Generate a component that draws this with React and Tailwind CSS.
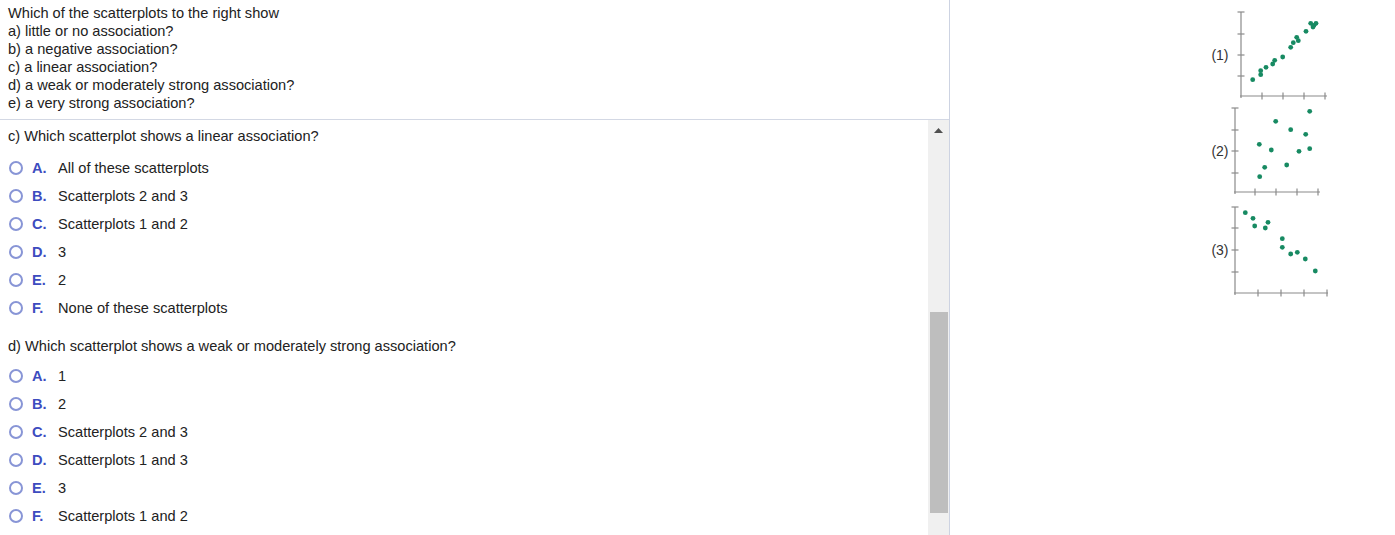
import React from "react";

const plots = [
  {
    label: "(1)",
    ax: 1241, top: 12, ay: 96, right: 1326,
    yt: [34, 55, 76], xt: [1262, 1283, 1304, 1325], ly: 55,
    pts: [[1252.7,79.7],[1260.7,74.7],[1260.7,70.7],[1266,67.3],[1272.7,64],[1274.7,60.3],[1282.7,57],[1290.7,47.3],[1293.3,42.7],[1296.7,37.3],[1298.3,40.7],[1306,31.3],[1310.7,23.3],[1314,25.3],[1316,23.3],[1313,27]],
  },
  {
    label: "(2)",
    ax: 1235, top: 108, ay: 192, right: 1319,
    yt: [130, 151, 173], xt: [1255, 1276, 1297, 1318], ly: 151,
    pts: [[1309.7,111.3],[1275.7,121.3],[1290.7,129.7],[1305.7,134.3],[1259.3,144.3],[1271.3,150],[1299,151.3],[1309.7,148.7],[1264.7,167.3],[1286.7,165],[1259.7,176.7]],
  },
  {
    label: "(3)",
    ax: 1235, top: 207, ay: 293, right: 1327,
    yt: [228, 250, 272], xt: [1258, 1281, 1304, 1327], ly: 250,
    pts: [[1245.3,212.7],[1253,218.3],[1254.7,226],[1268,222.3],[1265.3,228],[1282.3,238.7],[1282.3,247.3],[1290.7,254],[1297.3,252.3],[1305.3,259],[1315.3,271]],
  },
];

function Plots() {
  return (
    <svg width="140" height="305" viewBox="1200 0 140 305">
      {plots.map((p, i) => (
        <g key={i}>
          <line x1={p.ax} y1={p.top} x2={p.ax} y2={p.ay + 2} stroke="#8a8a8a" strokeWidth="1.2" />
          <line x1={p.ax - 1} y1={p.ay} x2={p.right + 1} y2={p.ay} stroke="#8a8a8a" strokeWidth="1.2" />
          {[p.top, ...p.yt].map((y, j) => (
            <line key={"y" + j} x1={p.ax - 3.5} y1={y} x2={p.ax + 3.5} y2={y} stroke="#8a8a8a" strokeWidth="1.2" />
          ))}
          {p.xt.map((x, j) => (
            <line key={"x" + j} x1={x} y1={p.ay - 3.5} x2={x} y2={p.ay + 3.5} stroke="#8a8a8a" strokeWidth="1.2" />
          ))}
          {p.pts.map(([x, y], j) => (
            <circle key={"p" + j} cx={x} cy={y} r="2.4" fill="#178a62" />
          ))}
          <text x="1228.5" y={p.ly + 5} textAnchor="end" fontSize="14" fill="#333" fontFamily="'Liberation Sans', Arial, sans-serif">
            {p.label}
          </text>
        </g>
      ))}
    </svg>
  );
}

function Option({ letter, text }) {
  return (
    <div className="flex items-center h-[28px]">
      <span className="ml-[1px] w-[14px] h-[14px] rounded-full border-2 border-[#8895d6] shrink-0" />
      <span className="ml-[9px] w-[26px] font-bold text-[#3d4cbf]">{letter}</span>
      <span>{text}</span>
    </div>
  );
}

export default function App() {
  const c = [
    ["A.", "All of these scatterplots"],
    ["B.", "Scatterplots 2 and 3"],
    ["C.", "Scatterplots 1 and 2"],
    ["D.", "3"],
    ["E.", "2"],
    ["F.", "None of these scatterplots"],
  ];
  const d = [
    ["A.", "1"],
    ["B.", "2"],
    ["C.", "Scatterplots 2 and 3"],
    ["D.", "Scatterplots 1 and 3"],
    ["E.", "3"],
    ["F.", "Scatterplots 1 and 2"],
  ];
  return (
    <div className="flex w-[1395px] h-[535px] bg-white overflow-hidden font-['Liberation_Sans',Arial,sans-serif] text-[14.6px] leading-[18px] text-[#222]">
      <div className="w-[950px] shrink-0 flex flex-col border-r border-[#cdd3e2]">
        <div className="pl-[8px] pt-[4px] pb-[7px] border-b border-[#d3d8e4]">
          <p>Which of the scatterplots to the right show</p>
          <p>a) little or no association?</p>
          <p>b) a negative association?</p>
          <p>c) a linear association?</p>
          <p>d) a weak or moderately strong association?</p>
          <p>e) a very strong association?</p>
        </div>
        <div className="flex-1 flex min-h-0">
          <div className="flex-1 pl-[8px] pt-[7px]">
            <p>c) Which scatterplot shows a linear association?</p>
            <div className="mt-[9px]">
              {c.map(([l, t]) => (
                <Option key={l} letter={l} text={t} />
              ))}
            </div>
            <p className="mt-[15px]">d) Which scatterplot shows a weak or moderately strong association?</p>
            <div className="mt-[7px]">
              {d.map(([l, t]) => (
                <Option key={l} letter={l} text={t} />
              ))}
            </div>
          </div>
          <div className="w-[21px] bg-[#f0f0f0] flex flex-col shrink-0">
            <div className="h-[20px] flex items-center justify-center">
              <svg width="9" height="5" viewBox="0 0 9 5">
                <polygon points="4.5,0 9,5 0,5" fill="#505050" />
              </svg>
            </div>
            <div className="h-[172px]" />
            <div className="h-[201px] ml-[2px] mr-[1px] bg-[#bebebe]" />
          </div>
        </div>
      </div>
      <div className="flex-1">
        <div className="ml-[250px]">
          <Plots />
        </div>
      </div>
    </div>
  );
}
